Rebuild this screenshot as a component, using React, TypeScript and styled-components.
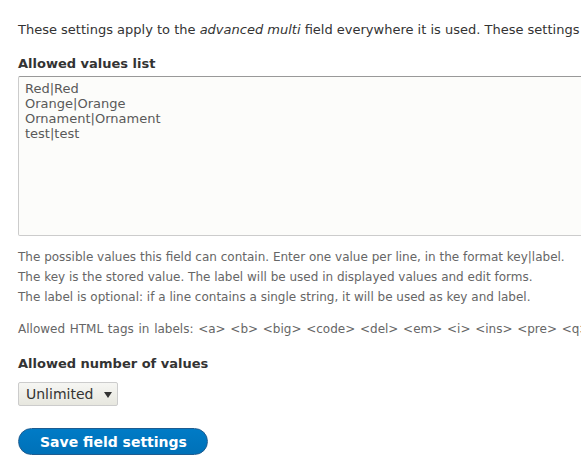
import React from 'react';
import styled, { createGlobalStyle } from 'styled-components';

const GlobalStyle = createGlobalStyle`
  html, body {
    margin: 0;
    padding: 0;
    background: #fff;
    overflow: hidden;
  }
  body {
    font-family: "DejaVu Sans", "Lucida Grande", Verdana, sans-serif;
    font-size: 13px;
    color: #333;
  }
`;

const Page = styled.div`
  width: 900px;
  padding: 21px 18px 0;
`;

const Intro = styled.p`
  margin: 0 0 16px;
  line-height: 18px;
  white-space: nowrap;
`;

const FormItem = styled.div`
  margin-bottom: 16px;
`;

const Label = styled.label`
  display: block;
  font-weight: bold;
  font-size: 13px;
  line-height: 18px;
  margin-bottom: 3px;
`;

const TextArea = styled.textarea`
  display: block;
  box-sizing: border-box;
  width: 100%;
  height: 160px;
  margin: 0;
  padding: 4px 6px;
  font-family: "DejaVu Sans", sans-serif;
  font-size: 13px;
  line-height: 15px;
  color: #595959;
  background: #fcfcfa;
  border: 1px solid #ccc;
  border-top-color: #999;
  border-radius: 2px;
  resize: none;
  outline: none;
`;

const Description = styled.div`
  margin-top: 11px;
  font-size: 12px;
  line-height: 20px;
  color: #666;
  white-space: nowrap;
`;

const Tags = styled.p`
  margin: 12px 0 0;
  font-size: 12px;
  line-height: 20px;
  color: #666;
  white-space: nowrap;
  word-spacing: 0.9px;
`;

const SelectBox = styled.div`
  display: inline-flex;
  align-items: center;
  gap: 11px;
  box-sizing: border-box;
  height: 24px;
  padding: 0 5px 0 7px;
  margin-top: 6px;
  font-size: 14px;
  color: #333;
  background: linear-gradient(#f6f6f3, #e7e7df);
  border: 1px solid #ccc;
  border-radius: 2px;
`;

const Caret = styled.span`
  width: 0;
  height: 0;
  border-left: 4px solid transparent;
  border-right: 4px solid transparent;
  border-top: 6px solid #333;
  margin-top: 1px;
`;

const Button = styled.button`
  display: block;
  margin-top: 22px;
  height: 27px;
  padding: 0 20px 0 21px;
  font-family: "DejaVu Sans", sans-serif;
  font-size: 14px;
  font-weight: bold;
  color: #fff;
  background: linear-gradient(#007bc6, #0071b8);
  border: 1px solid #1e5c90;
  border-radius: 20px;
  cursor: pointer;
`;

const App: React.FC = () => {
  return (
    <Page>
      <GlobalStyle />
      <Intro>
        These settings apply to the <em>advanced multi</em> field everywhere it is used. These settings impact the way that data is stored in the database and cannot be changed once data has been created.
      </Intro>
      <FormItem>
        <Label>Allowed values list</Label>
        <TextArea
          readOnly
          value={'Red|Red\nOrange|Orange\nOrnament|Ornament\ntest|test'}
        />
        <Description>
          The possible values this field can contain. Enter one value per line, in the format key|label.
          <br />
          The key is the stored value. The label will be used in displayed values and edit forms.
          <br />
          The label is optional: if a line contains a single string, it will be used as key and label.
        </Description>
        <Tags>
          Allowed HTML tags in labels: &lt;a&gt; &lt;b&gt; &lt;big&gt; &lt;code&gt; &lt;del&gt; &lt;em&gt; &lt;i&gt; &lt;ins&gt; &lt;pre&gt; &lt;q&gt; &lt;small&gt; &lt;span&gt; &lt;strong&gt; &lt;sub&gt; &lt;sup&gt; &lt;tt&gt; &lt;ol&gt; &lt;ul&gt; &lt;li&gt; &lt;p&gt; &lt;br&gt; &lt;img&gt;
        </Tags>
      </FormItem>
      <FormItem>
        <Label>Allowed number of values</Label>
        <SelectBox>
          Unlimited
          <Caret />
        </SelectBox>
      </FormItem>
      <Button>Save field settings</Button>
    </Page>
  );
};

export default App;
